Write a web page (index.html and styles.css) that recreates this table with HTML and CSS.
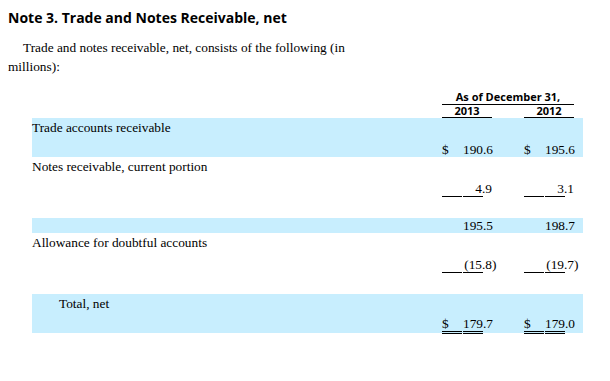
FILE: index.html
```html
<!DOCTYPE html>
<html>
<head>
<meta charset="utf-8">
<link rel="stylesheet" href="styles.css">
</head>
<body>
<h1 class="title">Note 3. Trade and Notes Receivable, net</h1>
<p class="intro">Trade and notes receivable, net, consists of the following (in millions):</p>
<div class="sched">
  <div class="head">
    <div class="head-cols">
      <div class="asof">As of December 31,</div>
      <div class="years"><span class="yr">2013</span><span class="yr">2012</span></div>
    </div>
  </div>
  <div class="row hl r-tall">
    <div class="lbl">Trade accounts receivable</div>
    <div class="amt"><span class="cur">$</span><span class="val">190.6</span></div>
    <div class="amt"><span class="cur">$</span><span class="val">195.6</span></div>
  </div>
  <div class="row r-xtall">
    <div class="lbl">Notes receivable, current portion</div>
    <div class="amt"><span class="cur ul"></span><span class="val ul">4.9</span></div>
    <div class="amt"><span class="cur ul"></span><span class="val ul">3.1</span></div>
  </div>
  <div class="row hl r-short">
    <div class="lbl"></div>
    <div class="amt flush"><span class="cur"></span><span class="val">195.5</span></div>
    <div class="amt flush"><span class="cur"></span><span class="val">198.7</span></div>
  </div>
  <div class="row r-xtall">
    <div class="lbl">Allowance for doubtful accounts</div>
    <div class="amt"><span class="cur ul"></span><span class="val ul">(15.8</span><span class="paren">)</span></div>
    <div class="amt"><span class="cur ul"></span><span class="val ul">(19.7</span><span class="paren">)</span></div>
  </div>
  <div class="row hl r-tall">
    <div class="lbl total">Total, net</div>
    <div class="amt dbl-row"><span class="cur dbl">$</span><span class="val dbl">179.7</span></div>
    <div class="amt dbl-row"><span class="cur dbl">$</span><span class="val dbl">179.0</span></div>
  </div>
</div>
</body>
</html>
```

FILE: styles.css
```css
html, body {
  margin: 0;
  padding: 0;
  background: #ffffff;
}

body {
  padding: 8px;
  color: #000000;
  font-family: "Liberation Serif", "Times New Roman", serif;
  font-size: 13.33px;
}

.title {
  margin: 0;
  font-family: "Open Sans", "DejaVu Sans", sans-serif;
  font-weight: 700;
  font-size: 14px;
  line-height: 20px;
}

.intro {
  margin: 10px 0 0 0;
  width: 352px;
  text-indent: 15px;
  line-height: 19px;
}

.sched {
  margin: 14px 0 0 24px;
  width: 551px;
}

.head {
  display: flex;
  padding-left: 410px;
}

.head-cols {
  width: 132px;
  font-family: "Open Sans", "DejaVu Sans", sans-serif;
  font-weight: 700;
  font-size: 11px;
  line-height: 14px;
}

.asof {
  text-align: center;
  border-bottom: 1px solid #000;
  height: 14px;
}

.years {
  display: flex;
  justify-content: space-between;
}

.yr {
  width: 50px;
  height: 12px;
  line-height: 12px;
  text-align: center;
  border-bottom: 1px solid #000;
}

.row {
  display: grid;
  grid-template-columns: 378px 50px 50px;
  column-gap: 32px;
  padding-right: 9px;
  align-items: start;
}

.hl {
  background: #c8eefe;
}

.r-tall { height: 39px; }
.r-xtall { height: 61px; }
.r-short { height: 15px; }

.lbl {
  padding-top: 2px;
  line-height: 15px;
  white-space: nowrap;
}

.lbl.total {
  padding-left: 27px;
}

.amt {
  display: flex;
  padding-top: 24px;
  line-height: 15px;
}

.amt.flush {
  padding-top: 0;
}

.amt.dbl-row {
  padding-top: 22px;
}

.cur {
  width: 20px;
  flex: none;
}

.val {
  width: 29px;
  margin-left: 1px;
  flex: none;
  text-align: right;
}

.ul {
  padding-bottom: 1px;
  background-image: linear-gradient(#000, #000);
  background-repeat: no-repeat;
  background-size: 20px 1px;
  background-position: left bottom;
}

.dbl {
  padding-bottom: 3px;
  background-image: linear-gradient(#000, #000), linear-gradient(#000, #000);
  background-repeat: no-repeat;
  background-size: 20px 1px, 20px 1px;
  background-position: left bottom, left calc(100% - 2px);
}

.paren {
  width: 0;
  flex: none;
  white-space: nowrap;
  overflow: visible;
}
```
